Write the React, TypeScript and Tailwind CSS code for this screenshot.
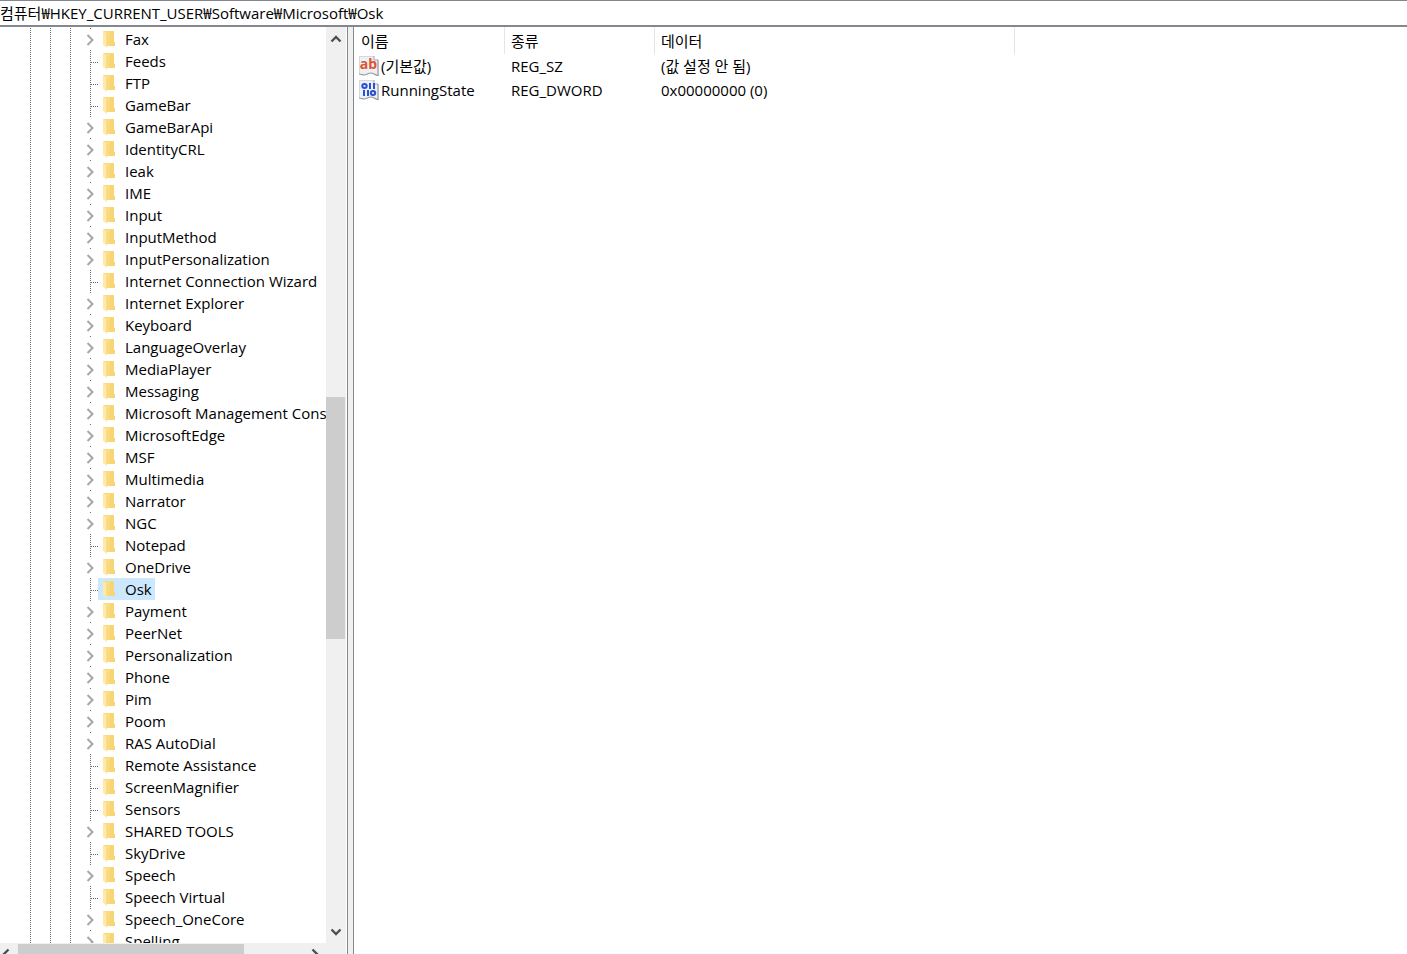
import clsx from "clsx";

type Key = { name: string; leaf?: boolean; selected?: boolean };

const keys: Key[] = [
  { name: "Fax" },
  { name: "Feeds", leaf: true },
  { name: "FTP", leaf: true },
  { name: "GameBar", leaf: true },
  { name: "GameBarApi" },
  { name: "IdentityCRL" },
  { name: "Ieak" },
  { name: "IME" },
  { name: "Input" },
  { name: "InputMethod" },
  { name: "InputPersonalization" },
  { name: "Internet Connection Wizard", leaf: true },
  { name: "Internet Explorer" },
  { name: "Keyboard" },
  { name: "LanguageOverlay" },
  { name: "MediaPlayer" },
  { name: "Messaging" },
  { name: "Microsoft Management Console" },
  { name: "MicrosoftEdge" },
  { name: "MSF" },
  { name: "Multimedia" },
  { name: "Narrator" },
  { name: "NGC" },
  { name: "Notepad", leaf: true },
  { name: "OneDrive" },
  { name: "Osk", leaf: true, selected: true },
  { name: "Payment" },
  { name: "PeerNet" },
  { name: "Personalization" },
  { name: "Phone" },
  { name: "Pim" },
  { name: "Poom" },
  { name: "RAS AutoDial" },
  { name: "Remote Assistance", leaf: true },
  { name: "ScreenMagnifier", leaf: true },
  { name: "Sensors", leaf: true },
  { name: "SHARED TOOLS" },
  { name: "SkyDrive", leaf: true },
  { name: "Speech" },
  { name: "Speech Virtual", leaf: true },
  { name: "Speech_OneCore" },
  { name: "Spelling" },
];

const values = [
  { name: "(기본값)", type: "REG_SZ", data: "(값 설정 안 됨)", binary: false },
  { name: "RunningState", type: "REG_DWORD", data: "0x00000000 (0)", binary: true },
];

const dotsY =
  "bg-[repeating-linear-gradient(to_bottom,#6b6b6b_0_1px,transparent_1px_2px)]";
const dotsX =
  "bg-[repeating-linear-gradient(to_right,#6b6b6b_0_1px,transparent_1px_2px)]";

function FolderIcon() {
  return (
    <svg viewBox="0 0 12 17" className="h-[17px] w-3 shrink-0" aria-hidden="true">
      <path d="M0 0h11v11h1v4H3z" fill="#fadc82" />
      <path d="M7 0h4v11h1v4H6z" fill="#f7d573" />
      <path d="M0 0l4 3v14l-4-3z" fill="#ffe9a8" />
      <path d="M4 3v12" stroke="#f3cf70" strokeWidth=".8" />
    </svg>
  );
}

function ValueIcon({ binary }: { binary: boolean }) {
  return (
    <svg viewBox="0 0 20 20" className="h-5 w-5 shrink-0" aria-hidden="true">
      <path d="M0 0h15l5 4v16c-4 0-4-3-8-3s-4 2-7 2c-2 0-3-1-5-1z" fill="#edf0f4" />
      <path d="M.5 18V.5H15" fill="none" stroke="#d5d8dc" />
      <path d="M15 0v4h4" fill="#fff" stroke="#a2a6ab" />
      <path d="M19 4v15.500c-3 0-4-2.500-7-2.500s-4 2-7 2c-2 0-3-1-5-1" fill="none" stroke="#96999e" strokeWidth="1.200" />
      {binary ? (
        <g fill="none" stroke="#2a4fd8" strokeWidth="2">
          <ellipse cx="5.500" cy="6" rx="2.200" ry="1.900" />
          <path d="M11 3v6M15 3v6M5 10v6M9 10v6" />
          <ellipse cx="14" cy="13" rx="2.200" ry="1.900" />
        </g>
      ) : (
        <text
          x="9.500"
          y="13"
          textAnchor="middle"
          className="fill-[#e0532e] font-['Open_Sans',sans-serif] text-[14px] font-bold"
        >
          ab
        </text>
      )}
    </svg>
  );
}

function ScrollArrow({ className }: { className?: string }) {
  return (
    <svg
      viewBox="0 0 12 8"
      className={clsx("h-2 w-3", className)}
      fill="none"
      stroke="#505050"
      strokeWidth="2.4"
      aria-hidden="true"
    >
      <path d="M1.500 6.500L6 2l4.500 4.500" />
    </svg>
  );
}

function TreeItem({ item }: { item: Key }) {
  return (
    <li role="treeitem" aria-selected={!!item.selected} className="flex h-[22px] items-stretch">
      {[0, 1, 2].map((level) => (
        <span key={level} className={clsx("mr-[19px] w-px shrink-0", dotsY)} />
      ))}
      {item.leaf ? (
        <span className="flex w-2 shrink-0 items-start">
          <span className={clsx("h-full w-px", dotsY)} />
          <span className={clsx("mt-3 h-px flex-1", dotsX)} />
        </span>
      ) : (
        <button
          type="button"
          aria-label={`${item.name} 확장`}
          className="-ml-2 flex w-4 shrink-0 flex-col items-center"
        >
          <span className="h-px w-px bg-[#6b6b6b]" />
          <svg viewBox="0 0 8 12" className="mt-[5px] h-3 w-2" fill="none" stroke="#a6a6a6" strokeWidth="2">
            <path d="M1.500 1l5 5-5 5" />
          </svg>
        </button>
      )}
      <button
        type="button"
        className={clsx(
          "flex items-center gap-[10px] pr-[3px] pl-[5px] whitespace-nowrap",
          item.selected && "bg-[#cce8ff]"
        )}
      >
        <FolderIcon />
        <span>{item.name}</span>
      </button>
    </li>
  );
}

function KeyTree() {
  return (
    <nav
      aria-label="레지스트리 키"
      className="flex w-[348px] shrink-0 flex-col border-r border-[#828790] bg-white pr-px"
    >
      <div className="flex min-h-0 flex-1">
        <ul role="tree" className="min-w-0 flex-1 overflow-hidden pt-px pl-[30px]">
          {keys.map((item) => (
            <TreeItem key={item.name} item={item} />
          ))}
        </ul>
        <div className="flex w-5 shrink-0 flex-col bg-[#f0f0f0]">
          <button type="button" aria-label="위로" className="flex h-6 items-center justify-center pr-px">
            <ScrollArrow />
          </button>
          <div className="flex flex-1 flex-col">
            <div className="grow-[346]" />
            <div className="mr-px grow-[242] bg-[#cdcdcd]" />
            <div className="grow-[282]" />
          </div>
          <button type="button" aria-label="아래로" className="flex h-[22px] items-center justify-center pr-px">
            <ScrollArrow className="rotate-180" />
          </button>
        </div>
      </div>
      <div className="flex h-[11px] shrink-0 items-start overflow-hidden bg-[#f0f0f0]">
        <button type="button" aria-label="왼쪽으로" className="w-[18px] pt-[7px]">
          <ScrollArrow className="-rotate-90" />
        </button>
        <div className="mt-px h-full w-[226px] bg-[#cdcdcd]" />
        <button type="button" aria-label="오른쪽으로" className="mr-[25px] ml-auto pt-[7px]">
          <ScrollArrow className="rotate-90" />
        </button>
      </div>
    </nav>
  );
}

function ValueList() {
  return (
    <main className="min-w-0 flex-1 overflow-hidden border-l border-[#828790] bg-white">
      <table className="w-full table-fixed border-separate border-spacing-0 text-left whitespace-nowrap">
        <colgroup>
          <col className="w-[151px]" />
          <col className="w-[150px]" />
          <col className="w-[360px]" />
          <col />
        </colgroup>
        <thead>
          <tr className="h-[27px]">
            <th className="border-r border-[#e5e5e5] p-0 pl-[7px] font-normal">이름</th>
            <th className="border-r border-[#e5e5e5] p-0 pl-[6px] font-normal">종류</th>
            <th className="border-r border-[#e5e5e5] p-0 pl-[6px] font-normal">데이터</th>
            <td />
          </tr>
        </thead>
        <tbody>
          {values.map((value) => (
            <tr key={value.name} className="h-6">
              <td className="p-0 pl-[5px]">
                <span className="flex items-center gap-[2px]">
                  <ValueIcon binary={value.binary} />
                  {value.name}
                </span>
              </td>
              <td className="p-0 pl-[6px]">{value.type}</td>
              <td className="p-0 pl-[6px]">{value.data}</td>
              <td />
            </tr>
          ))}
        </tbody>
      </table>
    </main>
  );
}

export default function App() {
  return (
    <div className="flex h-screen flex-col overflow-hidden bg-[#f0f0f0] font-['Open_Sans','Noto_Sans_CJK_KR',sans-serif] text-[15px] leading-5 text-black">
      <input
        type="text"
        aria-label="주소"
        defaultValue="컴퓨터₩HKEY_CURRENT_USER₩Software₩Microsoft₩Osk"
        className="h-[27px] w-full shrink-0 border-t border-b-2 border-[#828790] bg-white pb-0.5 outline-none"
      />
      <div className="flex min-h-0 flex-1 gap-[5px]">
        <KeyTree />
        <ValueList />
      </div>
    </div>
  );
}
